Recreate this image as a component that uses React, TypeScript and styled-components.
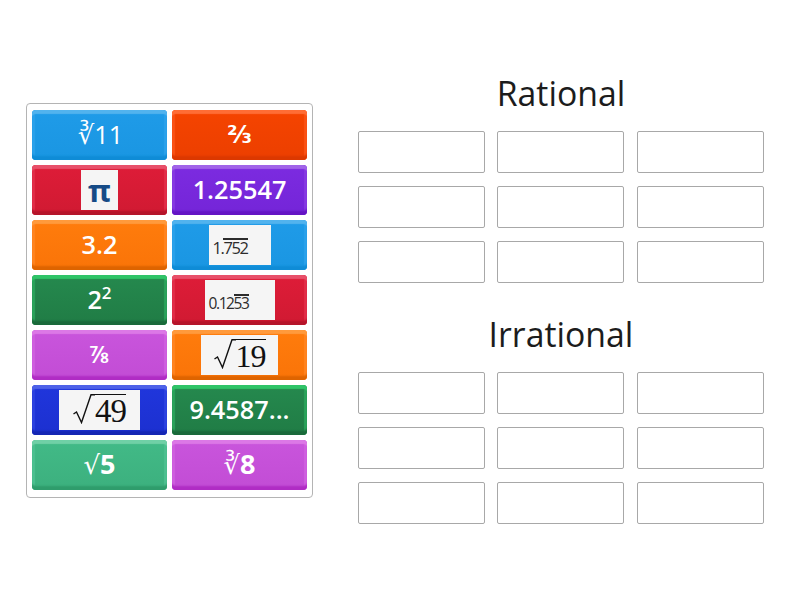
import styled, { createGlobalStyle } from "styled-components";

const GlobalStyle = createGlobalStyle`
  html, body {
    margin: 0;
    padding: 0;
    background: #fff;
    font-family: "Open Sans", "DejaVu Sans", sans-serif;
  }
`;

type Shade = { top: string; side: string; from: string; to: string; bottom: string };

const palette: Record<string, Shade> = {
  blue: { top: "#52b3ee", side: "#2ba1ea", from: "#1f9be8", to: "#1a96e2", bottom: "#0f8cd6" },
  flame: { top: "#ff6d35", side: "#fa5214", from: "#f54400", to: "#ec3f00", bottom: "#dc3800" },
  red: { top: "#e8506a", side: "#e22d48", from: "#de1c38", to: "#d01a32", bottom: "#b5152b" },
  purple: { top: "#a164e8", side: "#8639e2", from: "#7c2be0", to: "#7425d8", bottom: "#6414c4" },
  orange: { top: "#ff9a3c", side: "#ff8420", from: "#ff7c0c", to: "#fa7408", bottom: "#de6400" },
  green: { top: "#2fc468", side: "#2aa35a", from: "#25894e", to: "#207c45", bottom: "#1a6a3a" },
  magenta: { top: "#dc78e6", side: "#cf5fdf", from: "#c955dc", to: "#c24cd5", bottom: "#b02cc4" },
  cobalt: { top: "#4e62e8", side: "#2d42e0", from: "#2036dc", to: "#1c30d0", bottom: "#1526b4" },
  mint: { top: "#70d0a6", side: "#4cc090", from: "#42ba87", to: "#3cb07e", bottom: "#2f9c6c" },
};

const Page = styled.div`
  width: 800px;
  height: 600px;
  display: flex;
  align-items: flex-start;
  overflow: hidden;
`;

const Tray = styled.div`
  margin: 103px 0 0 26px;
  width: 287px;
  height: 395px;
  box-sizing: border-box;
  padding: 6px 5px 0 5px;
  border: 1px solid #b4b4b4;
  border-radius: 4px;
  display: grid;
  grid-template-columns: 135px 135px;
  grid-auto-rows: 50px;
  gap: 5px;
`;

const Tile = styled.div<{ $shade: string; $size?: number; $weight?: number }>`
  display: flex;
  justify-content: center;
  align-items: flex-start;
  border-radius: 4px;
  color: #fff;
  font-weight: ${(p) => p.$weight ?? 600};
  font-size: ${(p) => p.$size ?? 25.3}px;
  line-height: 48px;
  background: linear-gradient(${(p) => palette[p.$shade].from}, ${(p) => palette[p.$shade].to});
  box-shadow:
    inset 0 5px 1px -1px ${(p) => palette[p.$shade].top},
    inset 0 -5px 2px -1px ${(p) => palette[p.$shade].bottom},
    inset 4px 0 1px -1px ${(p) => palette[p.$shade].side},
    inset -4px 0 1px -1px ${(p) => palette[p.$shade].side};
`;

const Sup = styled.sup`
  font-size: 17px;
  line-height: 0;
  vertical-align: 10px;
`;

const RootedValue = styled.span`
  padding-left: 2px;
`;

const RadicalGlyph = styled.span`
  font-family: "DejaVu Sans", sans-serif;
  font-weight: 400;
  font-size: 26px;
`;

const Picture = styled.div<{ $width: number; $inset?: number }>`
  width: ${(p) => p.$width}px;
  height: 40px;
  margin-top: 5px;
  box-sizing: border-box;
  padding-left: ${(p) => p.$inset ?? 0}px;
  background: #f5f5f5;
  display: flex;
  align-items: center;
  justify-content: ${(p) => (p.$inset ? "flex-start" : "center")};
  font-weight: 400;
`;

const Pi = styled.span`
  font-family: "Open Sans", sans-serif;
  font-weight: 700;
  font-size: 31px;
  line-height: 36px;
  color: #164a86;
`;

const Decimal = styled.span<{ $size: number }>`
  font-family: "Open Sans", sans-serif;
  font-size: ${(p) => p.$size}px;
  font-weight: 500;
  letter-spacing: -1.4px;
  line-height: 20px;
  color: #2c2c2c;
  margin-top: 5px;
`;

const Bar = styled.span`
  display: inline-block;
  line-height: 15px;
  border-top: 2px solid #2c2c2c;
`;

const Root = styled.span<{ $size: number }>`
  display: flex;
  align-items: flex-start;
  height: 30px;
  margin-bottom: 3px;
  font-family: "Liberation Serif", serif;
  font-size: ${(p) => p.$size}px;
  color: #111;
`;

const RootSign = styled.svg`
  width: 22px;
  height: 30px;
  flex: none;
`;

const Radicand = styled.span`
  border-top: 1.5px solid #111;
  padding-top: 2px;
  line-height: 29px;
  letter-spacing: -1px;
`;

const Bins = styled.div`
  margin: 0 0 0 45px;
  width: 406px;
  display: flex;
  flex-direction: column;
`;

const Title = styled.h2<{ $top: number }>`
  margin: ${(p) => p.$top}px 0 15px;
  height: 45px;
  text-align: center;
  font-size: 33.8px;
  font-weight: 400;
  line-height: 45px;
  color: #1c1c1c;
`;

const SlotGrid = styled.div`
  display: grid;
  grid-template-columns: repeat(3, 127px);
  grid-auto-rows: 42px;
  column-gap: 12.4px;
  row-gap: 13px;
`;

const Slot = styled.div`
  box-sizing: border-box;
  border: 1px solid #a8a8a8;
  border-radius: 2px;
`;

function SquareRoot({ value, size }: { value: string; size: number }) {
  return (
    <Root $size={size}>
      <RootSign viewBox="0 0 22 30">
        <path d="M0.5 20 L3.5 18 L8.5 28.5 L18 0.8 L22 0.8" fill="none" stroke="#111" strokeWidth="1.4" />
      </RootSign>
      <Radicand>{value}</Radicand>
    </Root>
  );
}

const slots = Array.from({ length: 9 }, (_, i) => i);

function SlotBlock() {
  return (
    <SlotGrid>
      {slots.map((i) => (
        <Slot key={i} />
      ))}
    </SlotGrid>
  );
}

export default function App() {
  return (
    <Page>
      <GlobalStyle />
      <Tray>
        <Tile $shade="blue" $weight={500}>
          <RootedValue>
            <RadicalGlyph>∛</RadicalGlyph>11
          </RootedValue>
        </Tile>
        <Tile $shade="flame" $size={24}>
          ⅔
        </Tile>
        <Tile $shade="red">
          <Picture $width={37}>
            <Pi>π</Pi>
          </Picture>
        </Tile>
        <Tile $shade="purple">1.25547</Tile>
        <Tile $shade="orange">3.2</Tile>
        <Tile $shade="blue">
          <Picture $width={62} $inset={4}>
            <Decimal $size={16.5}>
              1.<Bar>752</Bar>
            </Decimal>
          </Picture>
        </Tile>
        <Tile $shade="green">
          <span>
            2<Sup>2</Sup>
          </span>
        </Tile>
        <Tile $shade="red">
          <Picture $width={70} $inset={4}>
            <Decimal $size={15.5}>
              0.12<Bar>53</Bar>
            </Decimal>
          </Picture>
        </Tile>
        <Tile $shade="magenta" $size={24}>
          ⅞
        </Tile>
        <Tile $shade="orange">
          <Picture $width={77}>
            <SquareRoot value="19" size={32} />
          </Picture>
        </Tile>
        <Tile $shade="cobalt">
          <Picture $width={81}>
            <SquareRoot value="49" size={33} />
          </Picture>
        </Tile>
        <Tile $shade="green">9.4587...</Tile>
        <Tile $shade="mint" $size={27} $weight={700}>
          <span>
            <RadicalGlyph>√</RadicalGlyph>5
          </span>
        </Tile>
        <Tile $shade="magenta" $size={27} $weight={700}>
          <span>
            <RadicalGlyph>∛</RadicalGlyph>8
          </span>
        </Tile>
      </Tray>
      <Bins>
        <Title $top={71}>Rational</Title>
        <SlotBlock />
        <Title $top={29}>Irrational</Title>
        <SlotBlock />
      </Bins>
    </Page>
  );
}
